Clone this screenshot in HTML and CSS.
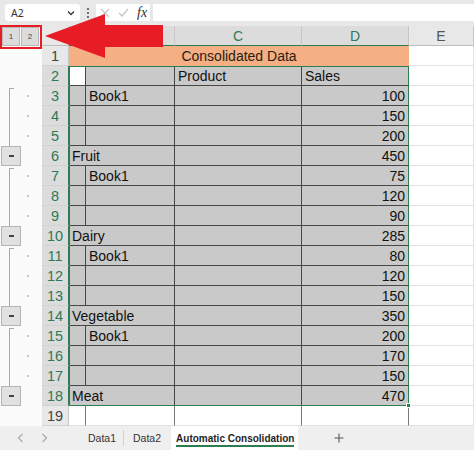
FILE: index.html
```html
<!DOCTYPE html>
<html>
<head>
<meta charset="utf-8">
<link rel="stylesheet" href="styles.css">
</head>
<body>
<div class="fbar">
  <div class="namebox"><span>A2</span>
    <svg width="8" height="6" viewBox="0 0 8 6"><polyline points="1,1.5 4,4.5 7,1.5" fill="none" stroke="#333" stroke-width="1.3"/></svg>
  </div>
  <div class="vdots">
    <svg width="4" height="12" viewBox="0 0 4 12"><circle cx="2" cy="2" r="1.1" fill="#555"/><circle cx="2" cy="6" r="1.1" fill="#555"/><circle cx="2" cy="10" r="1.1" fill="#555"/></svg>
  </div>
  <div class="fxgroup">
    <svg class="ic" width="10" height="10" viewBox="0 0 10 10"><path d="M1 1 L9 9 M9 1 L1 9" stroke="#c4c4c4" stroke-width="1.2" fill="none"/></svg>
    <svg class="ic" width="11" height="9" viewBox="0 0 11 9"><polyline points="1,5 4,8 10,1" fill="none" stroke="#c4c4c4" stroke-width="1.2"/></svg>
    <span class="fx">fx</span>
  </div>
  <div class="finput"></div>
</div>

<div class="sheet">
  <!-- header row -->
  <div class="oc lvcell"><span class="lv">1</span><span class="lv">2</span></div>
  <div class="corner"></div>
  <div class="ch on">A</div><div class="ch on">B</div><div class="ch on">C</div><div class="ch on">D</div><div class="ch">E</div>

  <!-- 1 -->
  <div class="oc"></div><div class="rh">1</div>
  <div class="c t">Consolidated Data</div><div class="c"></div>
  <!-- 2 -->
  <div class="oc"></div><div class="rh on">2</div>
  <div class="c d w"></div><div class="c d"></div><div class="c d">Product</div><div class="c d">Sales</div><div class="c"></div>
  <!-- 3 -->
  <div class="oc"><div class="ln s"></div><div class="dot"></div></div><div class="rh on">3</div>
  <div class="c d"></div><div class="c d">Book1</div><div class="c d"></div><div class="c d r">100</div><div class="c"></div>
  <!-- 4 -->
  <div class="oc"><div class="ln"></div><div class="dot"></div></div><div class="rh on">4</div>
  <div class="c d"></div><div class="c d"></div><div class="c d"></div><div class="c d r">150</div><div class="c"></div>
  <!-- 5 -->
  <div class="oc"><div class="ln"></div><div class="dot"></div></div><div class="rh on">5</div>
  <div class="c d"></div><div class="c d"></div><div class="c d"></div><div class="c d r">200</div><div class="c"></div>
  <!-- 6 -->
  <div class="oc"><div class="btn"><i></i></div></div><div class="rh on">6</div>
  <div class="c d sp">Fruit</div><div class="c d"></div><div class="c d r">450</div><div class="c"></div>
  <!-- 7 -->
  <div class="oc"><div class="ln s"></div><div class="dot"></div></div><div class="rh on">7</div>
  <div class="c d"></div><div class="c d">Book1</div><div class="c d"></div><div class="c d r">75</div><div class="c"></div>
  <!-- 8 -->
  <div class="oc"><div class="ln"></div><div class="dot"></div></div><div class="rh on">8</div>
  <div class="c d"></div><div class="c d"></div><div class="c d"></div><div class="c d r">120</div><div class="c"></div>
  <!-- 9 -->
  <div class="oc"><div class="ln"></div><div class="dot"></div></div><div class="rh on">9</div>
  <div class="c d"></div><div class="c d"></div><div class="c d"></div><div class="c d r">90</div><div class="c"></div>
  <!-- 10 -->
  <div class="oc"><div class="btn"><i></i></div></div><div class="rh on">10</div>
  <div class="c d sp">Dairy</div><div class="c d"></div><div class="c d r">285</div><div class="c"></div>
  <!-- 11 -->
  <div class="oc"><div class="ln s"></div><div class="dot"></div></div><div class="rh on">11</div>
  <div class="c d"></div><div class="c d">Book1</div><div class="c d"></div><div class="c d r">80</div><div class="c"></div>
  <!-- 12 -->
  <div class="oc"><div class="ln"></div><div class="dot"></div></div><div class="rh on">12</div>
  <div class="c d"></div><div class="c d"></div><div class="c d"></div><div class="c d r">120</div><div class="c"></div>
  <!-- 13 -->
  <div class="oc"><div class="ln"></div><div class="dot"></div></div><div class="rh on">13</div>
  <div class="c d"></div><div class="c d"></div><div class="c d"></div><div class="c d r">150</div><div class="c"></div>
  <!-- 14 -->
  <div class="oc"><div class="btn"><i></i></div></div><div class="rh on">14</div>
  <div class="c d sp">Vegetable</div><div class="c d"></div><div class="c d r">350</div><div class="c"></div>
  <!-- 15 -->
  <div class="oc"><div class="ln s"></div><div class="dot"></div></div><div class="rh on">15</div>
  <div class="c d"></div><div class="c d">Book1</div><div class="c d"></div><div class="c d r">200</div><div class="c"></div>
  <!-- 16 -->
  <div class="oc"><div class="ln"></div><div class="dot"></div></div><div class="rh on">16</div>
  <div class="c d"></div><div class="c d"></div><div class="c d"></div><div class="c d r">170</div><div class="c"></div>
  <!-- 17 -->
  <div class="oc"><div class="ln"></div><div class="dot"></div></div><div class="rh on">17</div>
  <div class="c d"></div><div class="c d"></div><div class="c d"></div><div class="c d r">150</div><div class="c"></div>
  <!-- 18 -->
  <div class="oc"><div class="btn"><i></i></div></div><div class="rh on">18</div>
  <div class="c d sp">Meat</div><div class="c d"></div><div class="c d r">470</div><div class="c"></div>
  <!-- 19 -->
  <div class="oc"></div><div class="rh">19</div>
  <div class="c z"></div><div class="c z"></div><div class="c z"></div><div class="c z"></div><div class="c"></div>

  <div class="sel"><div class="fh"></div></div>
</div>

<div class="tabs">
  <div class="nav">
    <svg width="7" height="10" viewBox="0 0 7 10"><polyline points="5.5,1 1.5,5 5.5,9" fill="none" stroke="#ababab" stroke-width="1.2"/></svg>
    <svg width="7" height="10" viewBox="0 0 7 10"><polyline points="1.5,1 5.5,5 1.5,9" fill="none" stroke="#ababab" stroke-width="1.2"/></svg>
  </div>
  <div class="tab t1">Data1</div>
  <div class="sep"></div>
  <div class="tab t2">Data2</div>
  <div class="tab act"><span>Automatic Consolidation</span></div>
  <div class="plus">
    <svg width="10" height="10" viewBox="0 0 10 10"><path d="M5 0.5 V9.5 M0.5 5 H9.5" stroke="#555" stroke-width="1.1" fill="none"/></svg>
  </div>
</div>

<div class="redbox"></div>
<svg class="arrow" width="180" height="62" viewBox="0 0 180 62"><polygon points="45,36 105,14 105,25 163,25 163,47 105,47 105,58" fill="#e81c24"/></svg>
</body>
</html>
```

FILE: styles.css
```css
* { box-sizing: border-box; }
body {
  margin: 0;
  width: 474px;
  height: 450px;
  overflow: hidden;
  position: relative;
  background: #fff;
  font-family: "Liberation Sans", Arial, sans-serif;
}

/* formula bar */
.fbar {
  height: 26px;
  background: #e8e8e8;
  display: flex;
  align-items: flex-start;
  padding-top: 4px;
}
.namebox {
  margin-left: 5px;
  width: 75px;
  height: 17px;
  background: #fff;
  border-radius: 3px;
  display: flex;
  align-items: center;
  justify-content: space-between;
  padding: 0 5px 0 6px;
  font-family: "Noto Sans", "Liberation Sans", sans-serif;
  font-size: 10.5px;
  color: #333;
}
.vdots {
  width: 16px;
  height: 17px;
  display: flex;
  align-items: center;
  justify-content: center;
}
.fxgroup {
  width: 54px;
  height: 17px;
  background: #fff;
  display: flex;
  align-items: center;
  padding-left: 4px;
  gap: 8px;
}
.fx {
  font-family: "Liberation Serif", serif;
  font-style: italic;
  font-size: 14px;
  color: #333;
  line-height: 17px;
}
.finput {
  margin-left: 3px;
  flex: 1;
  height: 17px;
  background: #fff;
}

/* sheet grid */
.sheet {
  display: grid;
  grid-template-columns: 42px 27px 17px 89px 127px 107px 1fr;
  grid-template-rows: repeat(20, 20px);
  position: relative;
}
.oc {
  background: #fbfbfb;
  display: flex;
  align-items: stretch;
}
.lvcell {
  gap: 1px;
  padding: 1px 0 0 2px;
}
.lv {
  width: 18px;
  height: 19px;
  background: #dcdcdc;
  border: 1px solid #b9b9b9;
  font-size: 8px;
  color: #444;
  display: flex;
  align-items: center;
  justify-content: center;
}
.ln {
  margin-left: 9px;
  width: 5px;
  border-left: 1px solid #a8a8a8;
}
.ln.s {
  margin-top: 2px;
  border-top: 1px solid #a8a8a8;
}
.dot {
  align-self: center;
  margin-left: 13px;
  width: 2px;
  height: 2px;
  border-radius: 1px;
  background: #b4b4b4;
}
.btn {
  margin-left: 1px;
  width: 20px;
  height: 20px;
  background: #e1e1e1;
  border: 1px solid #b4b4b4;
  display: flex;
  align-items: center;
  justify-content: center;
}
.btn i {
  display: block;
  width: 5px;
  height: 1.5px;
  background: #444;
}

.corner {
  background: #e8e8e8;
  border-right: 1px solid #c6c6c6;
  border-bottom: 1px solid #bdbdbd;
}
.ch {
  background: #e8e8e8;
  border-right: 1px solid #c6c6c6;
  border-bottom: 1px solid #bdbdbd;
  text-align: center;
  font-size: 14px;
  padding-top: 1px;
  line-height: 18px;
  color: #555;
}
.ch.on {
  background: #dcdcdc;
  color: #2d7a53;
  border-bottom-color: #2d7a53;
}
.rh {
  background: #e8e8e8;
  border-right: 1px solid #c6c6c6;
  border-bottom: 1px solid #d2d2d2;
  text-align: center;
  font-size: 14.5px;
  padding-top: 2px;
  line-height: 17px;
  color: #444;
}
.rh.on {
  background: #dcdcdc;
  color: #2d7a53;
  border-right-color: #2d7a53;
}

.c {
  border-right: 1px solid #e1e1e1;
  border-bottom: 1px solid #e1e1e1;
  background: #fff;
  font-size: 14px;
  padding: 2px 3px 0;
  line-height: 17px;
  white-space: nowrap;
  overflow: hidden;
  color: #111;
}
.d {
  background: #c9c9c9;
  border-right-color: #474747;
  border-bottom-color: #474747;
}
.w { background: #fff; }
.r { text-align: right; }
.sp { grid-column: span 2; }
.t {
  grid-column: span 4;
  background: #f4b084;
  text-align: center;
  border-right: none;
  border-bottom: none;
  color: #2a1d12;
}
.z { border-right-color: #7a7a7a; }

.sel {
  position: absolute;
  grid-row: 3 / 20;
  grid-column: 3 / 7;
  top: 0;
  left: 0;
  right: 0;
  bottom: 0;
  border: 1px solid #2e7d51;
  z-index: 2;
  pointer-events: none;
}
.fh {
  position: absolute;
  right: -3px;
  bottom: -3px;
  width: 5px;
  height: 5px;
  background: #2e7d51;
  border: 1px solid #fff;
}

/* sheet tabs */
.tabs {
  height: 24px;
  background: #efefef;
  display: flex;
  align-items: stretch;
  font-size: 10.5px;
  color: #333;
}
.nav {
  width: 78px;
  display: flex;
  align-items: center;
  padding-left: 17px;
  gap: 17px;
}
.tab {
  display: flex;
  align-items: center;
}
.t1 { padding: 0 7px 0 10px; }
.t2 { padding: 0 10px 0 9px; }
.sep {
  width: 1px;
  margin: 4px 0;
  background: #d0d0d0;
}
.act {
  background: #fff;
  padding: 0 4px 0 5px;
  font-weight: bold;
  font-size: 10px;
  color: #1f1f1f;
}
.act span {
  padding-top: 3px;
  padding-bottom: 1px;
  border-bottom: 2px solid #2e7d51;
}
.plus {
  margin-left: 36px;
  display: flex;
  align-items: center;
}

/* annotation overlays */
.redbox {
  position: absolute;
  left: 0;
  top: 25px;
  width: 42px;
  height: 24px;
  border: 2px solid #e81c24;
}
.arrow {
  position: absolute;
  left: 0;
  top: 0;
}
```
